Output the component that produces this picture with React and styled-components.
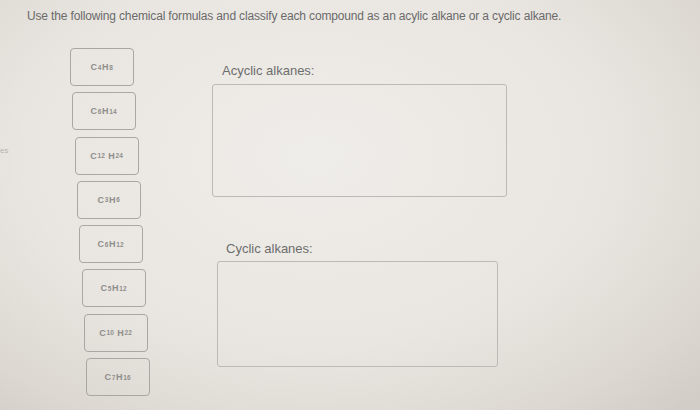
import React from "react";
import styled, { createGlobalStyle } from "styled-components";

const Global = createGlobalStyle`
  html, body { margin: 0; padding: 0; }
  body { width: 700px; height: 410px; overflow: hidden; font-family: "Liberation Sans", Arial, sans-serif; }
`;

const Page = styled.div`
  position: relative;
  width: 700px;
  height: 410px;
  box-sizing: border-box;
  padding: 9px 0 0 27px;
  background:
    radial-gradient(ellipse 75% 85% at 45% 38%, #efede9 0%, #e9e6e1 55%, #dcd7d1 85%, #d2cdc7 100%);
  overflow: hidden;
`;

const Title = styled.div`
  font-size: 12px;
  line-height: 14px;
  color: #6a6a6a;
  letter-spacing: -0.15px;
  white-space: nowrap;
`;

const Body = styled.div`
  display: grid;
  grid-template-columns: 185px 1fr;
  margin-top: 25px;
`;

const ChipColumn = styled.div`
  display: flex;
  flex-direction: column;
  gap: 6.3px;
  padding-left: 43px;
`;

const Chip = styled.div`
  width: 64px;
  height: 38px;
  margin-left: ${(p) => p.$shift}px;
  box-sizing: border-box;
  border: 1px solid #a9a7a4;
  border-radius: 4px;
  display: flex;
  align-items: center;
  justify-content: center;
  font-size: 9px;
  color: #8f8e8c;
  font-weight: bold;
  letter-spacing: 0.2px;
`;

const Sub = styled.span`
  font-size: 6.5px;
  margin: 0 0.5px;
`;

const DropColumn = styled.div`
  display: flex;
  flex-direction: column;
`;

const Label = styled.div`
  font-size: 13px;
  line-height: 16px;
  color: #6d6d6d;
  margin-top: ${(p) => p.$top}px;
  margin-left: ${(p) => p.$indent}px;
`;

const DropBox = styled.div`
  width: ${(p) => p.$w}px;
  height: ${(p) => p.$h}px;
  margin-top: ${(p) => p.$gap}px;
  margin-left: ${(p) => p.$left}px;
  box-sizing: border-box;
  border: 1px solid #bcbab6;
  border-radius: 3px;
`;

const EdgeText = styled.span`
  position: absolute;
  left: 0;
  top: 146px;
  font-size: 8px;
  color: #b5b3b0;
`;

const Formula = ({ parts }) => (
  <>
    {parts.map((p, i) =>
      i % 2 === 0 ? <span key={i}>{p}</span> : <Sub key={i}>{p}</Sub>
    )}
  </>
);

const chips = [
  ["C", "4", "H", "8"],
  ["C", "6", "H", "14"],
  ["C", "12", "\u00a0H", "24"],
  ["C", "3", "H", "6"],
  ["C", "6", "H", "12"],
  ["C", "5", "H", "12"],
  ["C", "10", "\u00a0H", "22"],
  ["C", "7", "H", "16"],
];

export default function App() {
  return (
    <>
      <Global />
      <Page>
        <EdgeText>es</EdgeText>
        <Title>
          Use the following chemical formulas and classify each compound as an acylic alkane or a cyclic alkane.
        </Title>
        <Body>
          <ChipColumn>
            {chips.map((c, i) => (
              <Chip key={i} $shift={Math.round(i * 2.3)}>
                <Formula parts={c} />
              </Chip>
            ))}
          </ChipColumn>
          <DropColumn>
            <Label $top={15} $indent={10}>Acyclic alkanes:</Label>
            <DropBox $gap={5} $left={0} $w={295} $h={113} />
            <Label $top={44} $indent={14}>Cyclic alkanes:</Label>
            <DropBox $gap={4} $left={5} $w={281} $h={106} />
          </DropColumn>
        </Body>
      </Page>
    </>
  );
}
